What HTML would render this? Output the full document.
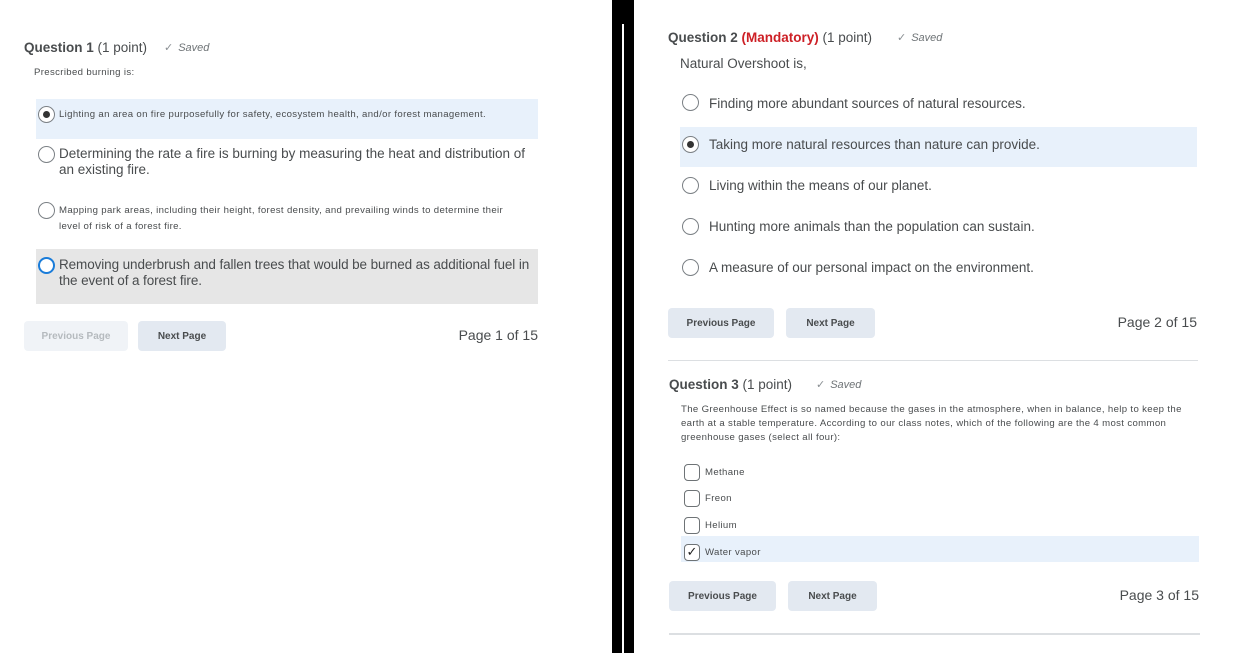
<!DOCTYPE html>
<html><head><style>
*{margin:0;padding:0;box-sizing:border-box}
body{width:1245px;height:653px;background:#fff;position:relative;overflow:hidden;font-family:"Liberation Sans",sans-serif;color:#494c4e}
.a{position:absolute;white-space:nowrap}
.t{font-size:13.5px;color:#494c4e}
.t b{font-weight:bold}
.sv{font-size:11px;font-style:italic;color:#6e7376}
.ck{color:#8a8f93;font-style:normal;margin-right:5px}
.sm{font-size:9.6px;color:#494c4e;letter-spacing:.35px}
.md{font-size:13.5px;color:#494c4e}
.r{position:absolute;width:17px;height:17px;border-radius:50%;border:1.3px solid #7b8085;background:#fff}
.r.on::after{content:"";position:absolute;left:4px;top:4px;width:7px;height:7px;border-radius:50%;background:#333}
.r.bl{border:2px solid #1a7cd9}
.cb{position:absolute;width:16px;height:17px;border-radius:4px;border:1.3px solid #6e7376;background:#fff}
.btn{position:absolute;height:30px;border-radius:4px;background:#e3e9f1;font-size:10px;font-weight:bold;color:#494c4e;display:flex;align-items:center;justify-content:center}
.pg{font-size:14px;color:#494c4e;text-align:right}
</style></head><body>
<div class="a t" style="left:24px;top:40px"><b>Question 1</b> (1 point)</div>
<div class="a sv" style="left:164px;top:41px"><span class="ck">✓</span>Saved</div>
<div class="a sm" style="left:34px;top:67px">Prescribed burning is:</div>
<div class="a" style="left:36px;top:99px;width:502px;height:40px;background:#e8f1fb"></div>
<div class="r on" style="left:38px;top:106px"></div>
<div class="a sm" style="left:59px;top:109px">Lighting an area on fire purposefully for safety, ecosystem health, and/or forest management.</div>
<div class="r" style="left:38px;top:146px"></div>
<div class="a md" style="left:59px;top:146px;line-height:16px">Determining the rate a fire is burning by measuring the heat and distribution of<br>an existing fire.</div>
<div class="r" style="left:38px;top:202px"></div>
<div class="a sm" style="left:59px;top:203px;line-height:16px">Mapping park areas, including their height, forest density, and prevailing winds to determine their<br>level of risk of a forest fire.</div>
<div class="a" style="left:36px;top:249px;width:502px;height:55px;background:#e6e6e6"></div>
<div class="r bl" style="left:38px;top:257px"></div>
<div class="a md" style="left:59px;top:257px;line-height:16px;letter-spacing:-.1px">Removing underbrush and fallen trees that would be burned as additional fuel in<br>the event of a forest fire.</div>
<div class="btn" style="left:24px;top:321px;width:104px;background:#f0f3f7;color:#b5babe">Previous Page</div>
<div class="btn" style="left:138px;top:321px;width:88px">Next Page</div>
<div class="a pg" style="left:400px;width:138px;top:327px">Page 1 of 15</div>
<div class="a" style="left:612px;top:0;width:22px;height:653px;background:#000"></div>
<div class="a" style="left:622px;top:24px;width:2px;height:629px;background:#fff"></div>
<div class="a t" style="left:668px;top:30px"><b>Question 2</b> <b style="color:#cd2026">(Mandatory)</b> (1 point)</div>
<div class="a sv" style="left:897px;top:31px"><span class="ck">✓</span>Saved</div>
<div class="a md" style="left:680px;top:56px">Natural Overshoot is,</div>
<div class="r" style="left:682px;top:94px"></div>
<div class="a md" style="left:709px;top:96px">Finding more abundant sources of natural resources.</div>
<div class="a" style="left:680px;top:127px;width:517px;height:40px;background:#e8f1fb"></div>
<div class="r on" style="left:682px;top:136px"></div>
<div class="a md" style="left:709px;top:137px">Taking more natural resources than nature can provide.</div>
<div class="r" style="left:682px;top:177px"></div>
<div class="a md" style="left:709px;top:178px">Living within the means of our planet.</div>
<div class="r" style="left:682px;top:218px"></div>
<div class="a md" style="left:709px;top:219px">Hunting more animals than the population can sustain.</div>
<div class="r" style="left:682px;top:259px"></div>
<div class="a md" style="left:709px;top:260px">A measure of our personal impact on the environment.</div>
<div class="btn" style="left:668px;top:308px;width:106px">Previous Page</div>
<div class="btn" style="left:786px;top:308px;width:89px">Next Page</div>
<div class="a pg" style="left:1060px;width:137px;top:314px">Page 2 of 15</div>
<div class="a" style="left:668px;top:360px;width:530px;height:1px;background:#dcdfe2"></div>
<div class="a t" style="left:669px;top:377px"><b>Question 3</b> (1 point)</div>
<div class="a sv" style="left:816px;top:378px"><span class="ck">✓</span>Saved</div>
<div class="a sm" style="left:681px;top:403px;line-height:14px">The Greenhouse Effect is so named because the gases in the atmosphere, when in balance, help to keep the<br>earth at a stable temperature. According to our class notes, which of the following are the 4 most common<br>greenhouse gases (select all four):</div>
<div class="cb" style="left:684px;top:464px"></div>
<div class="a sm" style="left:705px;top:467px">Methane</div>
<div class="cb" style="left:684px;top:490px"></div>
<div class="a sm" style="left:705px;top:493px">Freon</div>
<div class="cb" style="left:684px;top:517px"></div>
<div class="a sm" style="left:705px;top:520px">Helium</div>
<div class="a" style="left:681px;top:536px;width:518px;height:26px;background:#e8f1fb"></div>
<div class="cb" style="left:684px;top:544px;font-size:13px;line-height:14px;text-align:center;color:#222">✓</div>
<div class="a sm" style="left:705px;top:547px">Water vapor</div>
<div class="btn" style="left:669px;top:581px;width:107px">Previous Page</div>
<div class="btn" style="left:788px;top:581px;width:89px">Next Page</div>
<div class="a pg" style="left:1060px;width:139px;top:587px">Page 3 of 15</div>
<div class="a" style="left:669px;top:633px;width:531px;height:2px;background:#dcdfe2"></div>
</body></html>
